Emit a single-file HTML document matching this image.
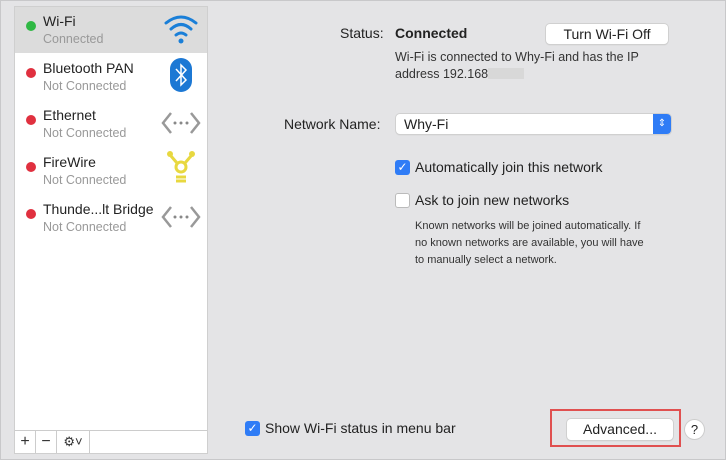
<html><head><style>
body{margin:0;width:726px;height:460px;background:#e4e4e6;font-family:"Liberation Sans",sans-serif;position:relative;overflow:hidden;color:#222}
.frame{position:absolute;left:0;top:0;width:724px;height:458px;border:1px solid #c8c8ca}
.side{position:absolute;left:14px;top:6px;width:192px;height:446px;background:#fff;border:1px solid #cfcfcf}
.row{position:absolute;left:0;width:192px;height:46px}
.dot{position:absolute;left:11px;top:14px;width:10px;height:10px;border-radius:50%;background:#e0303f}
.n{position:absolute;left:28px;top:6px;font-size:14px;color:#222}
.s{position:absolute;left:28px;top:25px;font-size:12.5px;color:#999}
.ic{position:absolute;left:146px;top:4px}
.bar{position:absolute;left:0;bottom:0;width:192px;height:22px;border-top:1px solid #ccc;background:#fff}
.bb{position:absolute;top:0;height:22px;border-right:1px solid #ccc;font-size:16px;text-align:center;line-height:22px;color:#333}
.t{position:absolute;font-size:14px;color:#222}
.btn{position:absolute;background:#fff;border-radius:4px;box-shadow:0 0 0 1px #d0d0d0,0 1px 1px #bbb;font-size:14px;text-align:center}
.cb{position:absolute;width:15px;height:15px;border-radius:3px}
.cb.on{background:#2f7cf6;color:#fff;font-size:12px;line-height:15px;text-align:center}
.cb.off{background:#fff;border:1px solid #bbb;width:13px;height:13px}
</style></head><body>
<div class="frame"></div>
<div class="side">
 <div class="row" style="top:0;background:#dcdcdc"><div class="dot" style="background:#2fb844"></div><div class="n">Wi-Fi</div><div class="s">Connected</div>
  <svg class="ic" width="40" height="36" viewBox="0 0 40 36"><g fill="none" stroke="#1a7fd8" stroke-width="3" stroke-linecap="round"><path d="M5 12 Q20 0 35 12"/><path d="M10 18 Q20 9 30 18"/><path d="M15 24 Q20 20 25 24"/></g><circle cx="20" cy="30" r="2.5" fill="#1a7fd8"/></svg></div>
 <div class="row" style="top:47px"><div class="dot"></div><div class="n">Bluetooth PAN</div><div class="s">Not Connected</div>
  <svg class="ic" width="40" height="40" viewBox="0 0 40 40" style="top:2px"><rect x="9" y="2" width="22" height="34" rx="11" fill="#1c78d4"/><path d="M15 13 L25 24 L20 29 L20 9 L25 14 L15 25" fill="none" stroke="#fff" stroke-width="1.5"/></svg></div>
 <div class="row" style="top:94px"><div class="dot"></div><div class="n">Ethernet</div><div class="s">Not Connected</div>
  <svg class="ic" width="40" height="36" viewBox="0 0 40 36"><g fill="none" stroke="#999" stroke-width="2.5"><path d="M10 8 L2 18 L10 28"/><path d="M30 8 L38 18 L30 28"/></g><g fill="#888"><circle cx="14" cy="18" r="1.5"/><circle cx="20" cy="18" r="1.5"/><circle cx="26" cy="18" r="1.5"/></g></svg></div>
 <div class="row" style="top:141px"><div class="dot"></div><div class="n">FireWire</div><div class="s">Not Connected</div>
  <svg class="ic" width="40" height="40" viewBox="0 0 40 40" style="top:0"><g fill="none" stroke="#e8d840" stroke-width="3"><circle cx="20" cy="19" r="5"/><path d="M16 15 L10 8 M24 15 L30 8 M15 29 H25 M15 33 H25"/></g><circle cx="9" cy="6" r="3" fill="#e8d840"/><circle cx="31" cy="6" r="3" fill="#e8d840"/></svg></div>
 <div class="row" style="top:188px"><div class="dot"></div><div class="n">Thunde...lt Bridge</div><div class="s">Not Connected</div>
  <svg class="ic" width="40" height="36" viewBox="0 0 40 36"><g fill="none" stroke="#999" stroke-width="2.5"><path d="M10 8 L2 18 L10 28"/><path d="M30 8 L38 18 L30 28"/></g><g fill="#888"><circle cx="14" cy="18" r="1.5"/><circle cx="20" cy="18" r="1.5"/><circle cx="26" cy="18" r="1.5"/></g></svg></div>
 <div class="bar"><div class="bb" style="left:0;width:20px">+</div><div class="bb" style="left:21px;width:20px">−</div><div class="bb" style="left:42px;width:32px;font-size:13px">⚙˅</div></div>
</div>
<div class="t" style="left:340px;top:25px">Status:</div>
<div class="t" style="left:395px;top:25px;font-weight:bold">Connected</div>
<div class="btn" style="left:546px;top:24px;width:122px;height:20px;line-height:20px">Turn Wi-Fi Off</div>
<div class="t" style="left:395px;top:49px;font-size:12.5px;line-height:17px;color:#333">Wi-Fi is connected to Why-Fi and has the IP<br>address 192.168<span style="display:inline-block;width:36px;height:11px;background:#d8d8d8;vertical-align:-1px"></span></div>
<div class="t" style="left:284px;top:116px">Network Name:</div>
<div class="btn" style="left:396px;top:114px;width:275px;height:20px;line-height:20px;text-align:left;text-indent:8px">Why-Fi<div style="position:absolute;right:0;top:0;width:18px;height:20px;background:#2f7cf6;border-radius:0 4px 4px 0;color:#fff;font-size:10px;text-indent:0;text-align:center;line-height:20px">⇕</div></div>
<div class="cb on" style="left:395px;top:160px">✓</div>
<div class="t" style="left:415px;top:159px">Automatically join this network</div>
<div class="cb off" style="left:395px;top:193px"></div>
<div class="t" style="left:415px;top:192px">Ask to join new networks</div>
<div class="t" style="left:415px;top:218px;font-size:11px;line-height:17px;color:#333">Known networks will be joined automatically. If<br>no known networks are available, you will have<br>to manually select a network.</div>
<div class="cb on" style="left:245px;top:421px">✓</div>
<div class="t" style="left:265px;top:420px">Show Wi-Fi status in menu bar</div>
<div style="position:absolute;left:550px;top:409px;width:131px;height:38px;border:2px solid #e05050;box-sizing:border-box"></div>
<div class="btn" style="left:567px;top:419px;width:106px;height:21px;line-height:21px">Advanced...</div>
<div style="position:absolute;left:685px;top:420px;width:19px;height:19px;border-radius:50%;background:#fff;box-shadow:0 0 0 1px #ccc;text-align:center;font-size:13px;line-height:19px">?</div>
</body></html>
